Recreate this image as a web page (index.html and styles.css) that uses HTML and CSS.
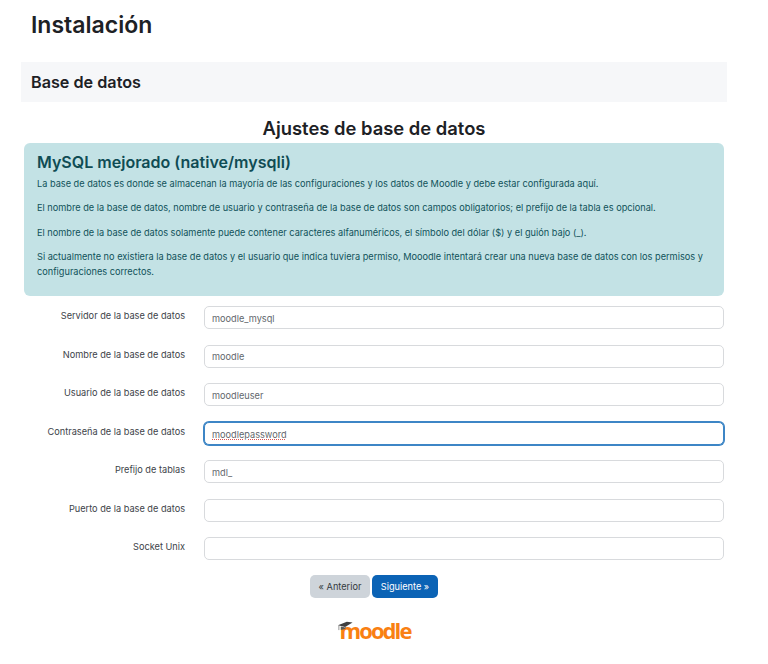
FILE: index.html
```html
<!DOCTYPE html>
<html lang="es">
<head>
<meta charset="utf-8">
<title>Instalación</title>
<link rel="stylesheet" href="styles.css">
</head>
<body>
<div class="page">
  <h1 class="title">Instalación</h1>
  <h2 class="bar">Base de datos</h2>
  <h3 class="sub">Ajustes de base de datos</h3>
  <div class="alert">
    <h4 class="alert-title">MySQL mejorado (native/mysqli)</h4>
    <p>La base de datos es donde se almacenan la mayoría de las configuraciones y los datos de Moodle y debe estar configurada aquí.</p>
    <p>El nombre de la base de datos, nombre de usuario y contraseña de la base de datos son campos obligatorios; el prefijo de la tabla es opcional.</p>
    <p>El nombre de la base de datos solamente puede contener caracteres alfanuméricos, el símbolo del dólar ($) y el guión bajo (_).</p>
    <p>Si actualmente no existiera la base de datos y el usuario que indica tuviera permiso, Mooodle intentará crear una nueva base de datos con los permisos y configuraciones correctos.</p>
  </div>
  <form class="form">
    <div class="row"><label class="lbl">Servidor de la base de datos</label><input class="inp" value="moodle_mysql"></div>
    <div class="row"><label class="lbl">Nombre de la base de datos</label><input class="inp" value="moodle"></div>
    <div class="row"><label class="lbl">Usuario de la base de datos</label><input class="inp" value="moodleuser"></div>
    <div class="row"><label class="lbl">Contraseña de la base de datos</label><div class="inp focus"><span class="spell">moodlepassword</span></div></div>
    <div class="row"><label class="lbl">Prefijo de tablas</label><input class="inp" value="mdl_"></div>
    <div class="row"><label class="lbl">Puerto de la base de datos</label><input class="inp" value=""></div>
    <div class="row"><label class="lbl">Socket Unix</label><input class="inp" value=""></div>
  </form>
  <div class="buttons">
    <button class="btn prev" type="button">« Anterior</button>
    <button class="btn next" type="button">Siguiente »</button>
  </div>
  <div class="logo">
    <span class="word">moodle</span>
    <svg class="cap" width="15" height="12" viewBox="0 0 17 13" aria-hidden="true">
      <path d="M0 4.4 L10 0.6 L16.5 1.4 L8 6.4 Z" fill="#3f3f3f"/>
      <path d="M3.2 6 L3.2 10 L8 8.8 L9.5 6 L8 7.2 Z" fill="#5a5a5a"/>
      <path d="M1 4.8 L1 10" stroke="#666" stroke-width="0.8"/>
    </svg>
  </div>
</div>
</body>
</html>
```
FILE: styles.css
```css
html, body { margin: 0; padding: 0; background: #fff; }
body { font-family: Inter, "Liberation Sans", sans-serif; color: #1d2125; }
.page { width: 768px; height: 664px; overflow: hidden; box-sizing: border-box; padding: 0 44px 0 21px; }
.title { margin: 0; padding: 9px 0 0 10px; font-size: 23px; line-height: 32px; font-weight: 600; height: 62px; box-sizing: border-box; }
.bar { margin: 0; height: 40px; background: #f6f7f9; padding: 0 10px; font-size: 16.2px; line-height: 41px; font-weight: 600; width: 706px; box-sizing: border-box; }
.sub { margin: 0; padding-top: 14px; height: 41px; box-sizing: border-box; text-align: center; font-size: 18.4px; line-height: 24px; font-weight: 600; padding-left: 3px; }
.alert { margin: 0 0 0 3px; height: 153px; box-sizing: border-box; background: #c3e2e5; color: #10525a; border-radius: 6px; padding: 9px 12px 0 13px; font-size: 9.2px; line-height: 15px; }
.alert-title { margin: 0 0 3px; font-size: 16.05px; line-height: 21px; font-weight: 600; color: #0f4c54; }
.alert p { margin: 0 0 9.4px; }
.form { margin: 10px 0 0 0; display: flex; flex-direction: column; gap: 15.5px; }
.row { display: flex; align-items: flex-start; }
.lbl { width: 164px; flex: none; text-align: right; font-size: 9.2px; line-height: 20px; color: #3d4349; }
.inp { margin-left: 19px; flex: 1; min-width: 0; height: 23px; box-sizing: border-box; border: 1px solid #d8dadd; border-radius: 5px; padding: 1px 7px 0; font-family: inherit; font-size: 9.2px; line-height: 21px; color: #62676c; background: #fff; outline: none; }
.focus { border: 1px solid #3d86c6; box-shadow: 0 0 0 1px #3d86c6; }
.spell { text-decoration: underline dotted #d9534f; }
.buttons { margin-top: 15px; display: flex; justify-content: center; gap: 2px; padding-left: 3px; }
.btn { height: 23px; border: 0; border-radius: 5px; padding: 0; font-family: inherit; font-size: 9.2px; line-height: 23px; white-space: nowrap; }
.prev { background: #ced4da; color: #343a40; width: 60px; }
.next { background: #0b63b5; color: #fff; width: 66px; }
.logo { position: relative; margin-top: 20px; display: flex; justify-content: center; height: 24px; padding-left: 5px; }
.cap { position: absolute; left: 317px; top: 3px; }
.word { font-family: "Open Sans", "Liberation Sans", sans-serif; font-weight: 700; font-size: 22px; line-height: 24px; color: #f98012; letter-spacing: -1.9px; }
```
